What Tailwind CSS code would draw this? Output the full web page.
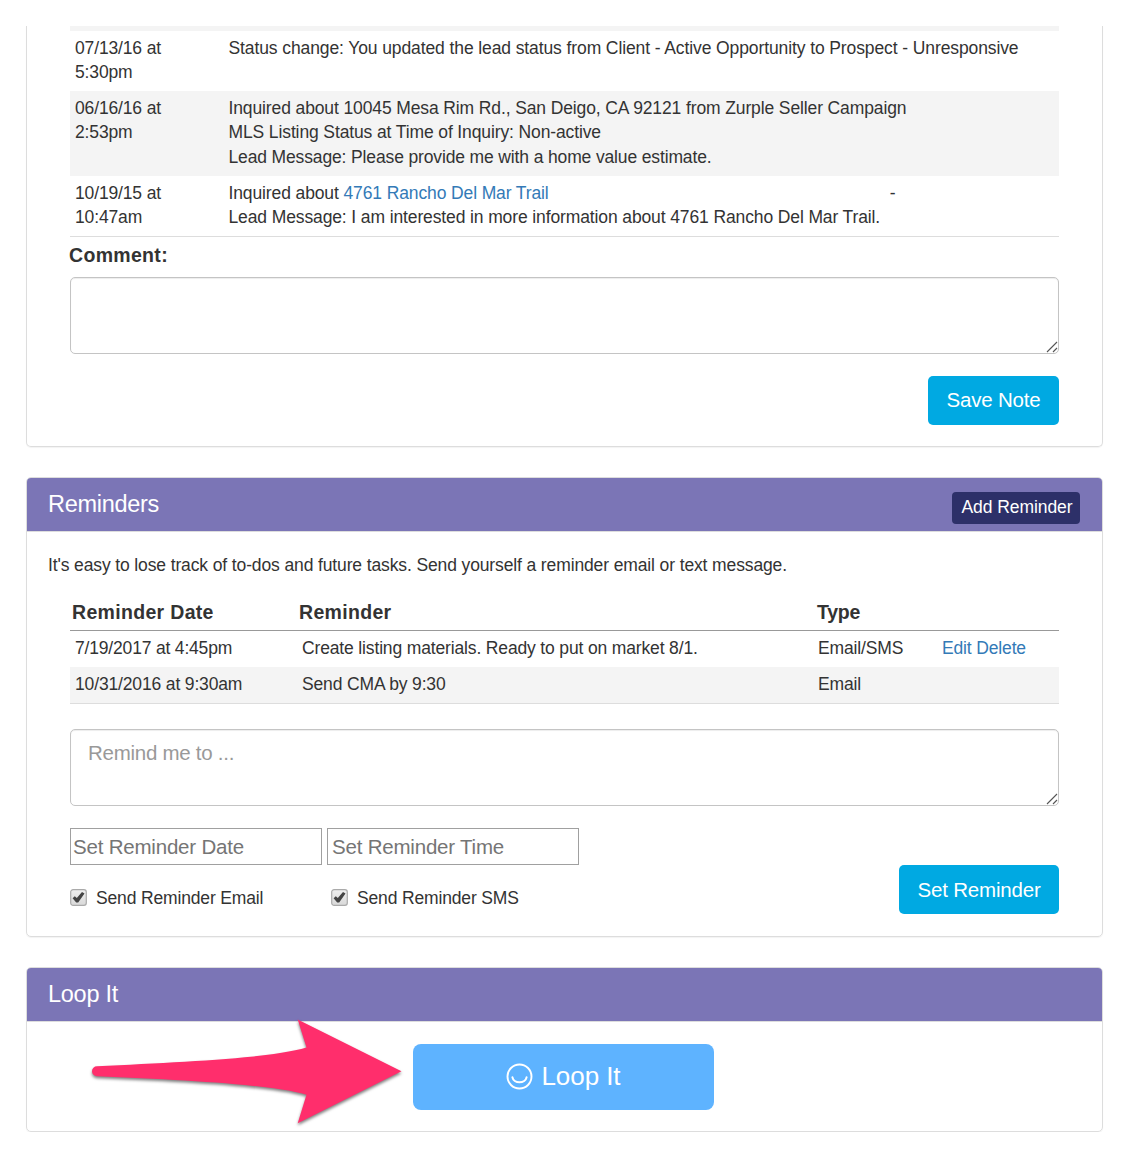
<!DOCTYPE html>
<html lang="en">
<head>
<meta charset="utf-8">
<title>Lead Details</title>
<script src="https://cdn.jsdelivr.net/npm/@tailwindcss/browser@4"></script>
</head>
<body class="bg-white font-['Liberation_Sans',Arial,sans-serif] text-[17.5px] leading-[24.4px] tracking-[-0.12px] text-[#333]">
<main class="ml-[26px] mt-[26px] w-[1077px] flex flex-col whitespace-nowrap">

  <section class="h-[421px] flex flex-col rounded-b-[5px] border border-t-0 border-[#ddd] px-[43px] shadow-[0_1px_1px_rgba(0,0,0,0.05)]">
    <div class="flex flex-col border-b border-[#ddd]">
      <div class="h-[5px] bg-[#f4f4f4]"></div>
      <div class="h-[60px] flex pt-[5px]">
        <div class="w-[158.5px] pl-[5px] tracking-[-0.15px]">07/13/16 at<br>5:30pm</div>
        <div class="tracking-[-0.104px]">Status change: You updated the lead status from Client - Active Opportunity to Prospect - Unresponsive</div>
      </div>
      <div class="h-[85px] flex bg-[#f4f4f4] pt-[5px]">
        <div class="w-[158.5px] pl-[5px] tracking-[-0.15px]">06/16/16 at<br>2:53pm</div>
        <div>Inquired about 10045 Mesa Rim Rd., San Deigo, CA 92121 from Zurple Seller Campaign<br>MLS Listing Status at Time of Inquiry: Non-active<br><span class="tracking-[-0.14px]">Lead Message: Please provide me with a home value estimate.</span></div>
      </div>
      <div class="h-[60px] flex pt-[5px]">
        <div class="w-[158.5px] pl-[5px] tracking-[-0.15px]">10/19/15 at<br>10:47am</div>
        <div>Inquired about <a class="text-[#337ab7]">4761 Rancho Del Mar Trail</a><span class="ml-[341px]">-</span><br>Lead Message: I am interested in more information about 4761 Rancho Del Mar Trail.</div>
      </div>
    </div>
    <label class="mt-[6px] -ml-px h-[34px] text-[19.5px] font-bold tracking-[0.32px]">Comment:</label>
    <div class="relative h-[77px] rounded-[5px] border border-[#c4c4c4] shadow-[inset_0_1px_1px_rgba(0,0,0,0.075)]">
      <svg class="absolute right-0 bottom-0 h-[12px] w-[12px]" viewBox="0 0 12 12" stroke="#555" stroke-width="1.1" fill="none"><path d="M1 11L11 1M7 11L11 7"/></svg>
    </div>
    <button class="mt-[22px] h-[49px] w-[131px] self-end rounded-[5px] bg-[#00a9e2] text-[20.5px] tracking-[-0.19px] text-white">Save Note</button>
  </section>

  <section class="mt-[30px] h-[460px] flex flex-col rounded-[5px] border border-[#ddd] shadow-[0_1px_1px_rgba(0,0,0,0.05)]">
    <header class="h-[54px] flex items-start justify-between rounded-t-[4px] border-b border-[#ddd] bg-[#7b75b6] pl-[21px] pr-[22px]">
      <h2 class="mt-[14px] text-[23.5px] tracking-[-0.29px] text-white">Reminders</h2>
      <button class="mt-[14px] h-[32px] w-[128px] rounded-[4px] bg-[#2d3069] pb-px pl-[2px] tracking-[-0.07px] text-white">Add Reminder</button>
    </header>
    <p class="mt-[21px] pl-[21px] tracking-[-0.125px]">It's easy to lose track of to-dos and future tasks. Send yourself a reminder email or text message.</p>
    <div class="flex flex-col px-[43px]">
      <div class="mt-[23px] h-[31px] flex border-b border-[#999] text-[19.5px] font-bold tracking-[0.32px]">
        <div class="w-[227px] pl-[2px]">Reminder Date</div>
        <div class="w-[518px] pl-[2px]">Reminder</div>
        <div class="pl-[2px] tracking-[-0.27px]">Type</div>
      </div>
      <div class="h-[36px] flex pt-[5px] tracking-[-0.15px]">
        <div class="w-[227px] pl-[5px] tracking-[-0.18px]">7/19/2017 at 4:45pm</div>
        <div class="w-[517px] pl-[5px]">Create listing materials. Ready to put on market 8/1.</div>
        <div class="w-[123px] pl-[4px]">Email/SMS</div>
        <div class="pl-[5px] text-[#337ab7]">Edit Delete</div>
      </div>
      <div class="h-[37px] flex border-b border-[#ddd] bg-[#f4f4f4] pt-[5px] tracking-[-0.15px]">
        <div class="w-[227px] pl-[5px]">10/31/2016 at 9:30am</div>
        <div class="w-[517px] pl-[5px]">Send CMA by 9:30</div>
        <div class="pl-[4px]">Email</div>
      </div>
      <div class="relative mt-[25px] h-[77px] rounded-[5px] border border-[#c4c4c4] pt-[11px] pl-[17px] text-[20.5px] tracking-[-0.27px] text-[#999] shadow-[inset_0_1px_1px_rgba(0,0,0,0.075)]">
        Remind me to ...
        <svg class="absolute right-0 bottom-0 h-[12px] w-[12px]" viewBox="0 0 12 12" stroke="#555" stroke-width="1.1" fill="none"><path d="M1 11L11 1M7 11L11 7"/></svg>
      </div>
      <div class="mt-[22px] flex justify-between">
        <div>
          <div class="flex gap-[5px] text-[20.5px] tracking-[-0.2px] text-[#757575]">
            <div class="h-[37px] w-[252px] border border-[#a0a0a0] pt-[6px] pl-[2px]">Set Reminder Date</div>
            <div class="h-[37px] w-[252px] border border-[#a0a0a0] pt-[6px] pl-[4px]">Set Reminder Time</div>
          </div>
          <div class="mt-[21px] flex tracking-[-0.155px]">
            <label class="flex w-[261px] gap-[9px]">
              <svg class="mt-[3px] h-[17px] w-[17px]" viewBox="0 0 17 17"><defs><linearGradient id="cb" x2="0" y2="1"><stop stop-color="#efefef"/><stop offset="1" stop-color="#d9d9d9"/></linearGradient></defs><rect x=".7" y=".7" width="15.6" height="15.6" rx="2.4" fill="url(#cb)" stroke="#aaa" stroke-width="1.2"/><path d="M2.600 9.300L4.800 7.300L6.800 9.100L12 3L14.500 4.500L8.200 13.600H6.200Z" fill="#444"/></svg>
              Send Reminder Email</label>
            <label class="flex gap-[9px]">
              <svg class="mt-[3px] h-[17px] w-[17px]" viewBox="0 0 17 17"><rect x=".7" y=".7" width="15.6" height="15.6" rx="2.4" fill="url(#cb)" stroke="#aaa" stroke-width="1.2"/><path d="M2.600 9.300L4.800 7.300L6.800 9.100L12 3L14.500 4.500L8.200 13.600H6.200Z" fill="#444"/></svg>
              Send Reminder SMS</label>
          </div>
        </div>
        <button class="mt-[37px] h-[49px] w-[160px] rounded-[5px] bg-[#00a9e2] text-[20.5px] tracking-[-0.19px] text-white">Set Reminder</button>
      </div>
    </div>
  </section>

  <section class="relative mt-[29.5px] h-[165.5px] rounded-[5px] border border-[#ddd] shadow-[0_1px_1px_rgba(0,0,0,0.05)]">
    <header class="h-[54px] rounded-t-[4px] border-b border-[#ddd] bg-[#7b75b6] pt-[14px] pl-[21px]">
      <h2 class="text-[23.5px] tracking-[-0.27px] text-white">Loop It</h2>
    </header>
    <button class="ml-[386px] mt-[22px] flex h-[66px] w-[301px] items-center justify-center gap-[8px] rounded-[8px] bg-[#5eb3ff] pb-px text-[26px] tracking-[-0.07px] text-white">
      <svg class="h-[27px] w-[27px]" viewBox="0 0 27 27" fill="none" stroke="#fff" stroke-linecap="round"><circle cx="13.500" cy="13.500" r="12" stroke-width="1.900"/><path d="M6.400 14.200A7.200 6.200 0 0 0 20.600 14.200" stroke-width="2"/></svg>
      <span>Loop It</span>
    </button>
    <svg class="absolute top-[47.5px] left-[60px] h-[116px] w-[325px] drop-shadow-[0_2px_1.5px_rgba(0,0,0,0.5)]" viewBox="87 1015 325 116"><path d="M97 1066.3C180 1062 270 1058.500 306.500 1047.500L297.700 1019.500L401.500 1071.200L297.700 1123.300L306.500 1094.800C270 1084 180 1080 97 1076.300A5 5 0 0 1 97 1066.300Z" fill="#ff2e6c"/></svg>
  </section>
</main>
</body>
</html>
